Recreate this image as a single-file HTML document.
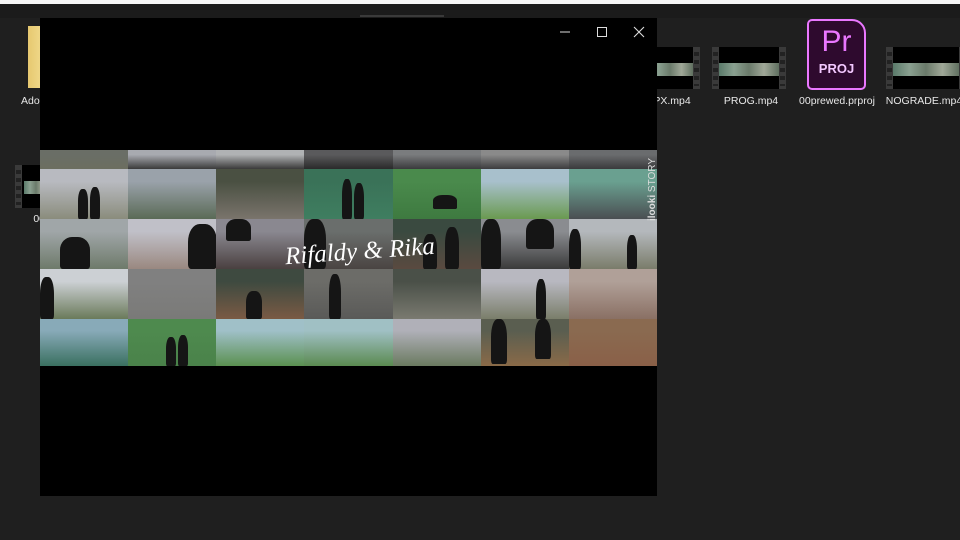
<!DOCTYPE html>
<html><head><meta charset="utf-8"><style>
*{margin:0;padding:0;box-sizing:border-box}
body{width:960px;height:540px;background:#1f1f1f;position:relative;overflow:hidden;font-family:"Liberation Sans",sans-serif}
.abs{position:absolute}
.lbl{position:absolute;color:#e8e8e8;font-size:10.5px;text-align:center;width:90px}
.film{position:absolute;background:#000;border-left:7px solid #3a3a3a;border-right:7px solid #3a3a3a}
.film:before,.film:after{content:"";position:absolute;top:3px;bottom:3px;width:5px;background:repeating-linear-gradient(#3a3a3a 0 2px,#222 2px 6px,#3a3a3a 6px 8px)}
.film:before{left:-6px}.film:after{right:-6px}
.strip{position:absolute;left:0;right:0;top:38%;height:30%;background:linear-gradient(90deg,#5a7a6a,#8aa090,#6a7a6a,#a0a898,#607060)}
#win{left:40px;top:18px;width:617px;height:478px;background:#000}
.grid{position:absolute;left:0;top:132px;width:617px;height:216px}
.c{position:absolute;overflow:hidden}
.p{position:absolute;background:#151515;border-radius:40% 40% 10% 10%}
</style></head><body>
<div class="abs" style="left:0;top:0;width:960px;height:4px;background:#f6f6f6"></div>
<div class="abs" style="left:0;top:4px;width:960px;height:14px;background:#1b1b1b"></div>
<div class="abs" style="left:360px;top:15px;width:84px;height:2px;background:#3a3a3a"></div>

<div class="abs" style="left:28px;top:26px;width:14px;height:62px;background:linear-gradient(90deg,#e6c870,#f0d98a)"></div>
<div class="lbl" style="left:-20px;top:95px;width:80px;text-align:right;padding-right:18px">Adol</div>
<div class="lbl" style="left:-20px;top:107px;width:80px;text-align:right;padding-right:7px">P</div>
<div class="lbl" style="left:-20px;top:119px;width:80px;text-align:right;padding-right:5px">P</div>
<div class="film" style="left:15px;top:165px;width:40px;height:43px"><div class="strip" style="left:2px"></div></div>
<div class="lbl" style="left:-15px;top:213px;width:60px;text-align:right">00</div>

<div class="film" style="left:640px;top:47px;width:60px;height:42px"><div class="strip"></div></div>
<div class="lbl" style="left:627px;top:95px">PX.mp4</div>
<div class="film" style="left:712px;top:47px;width:74px;height:42px"><div class="strip"></div></div>
<div class="lbl" style="left:706px;top:95px">PROG.mp4</div>
<div class="abs" style="left:807px;top:19px;width:59px;height:71px;background:#2e0a2e;border:2px solid #ea77ff;border-radius:5px 14px 5px 5px;text-align:center">
<div style="font-size:30px;line-height:32px;margin-top:5px;color:#ea77ff">Pr</div>
<div style="font-size:13px;font-weight:bold;margin-top:3px;color:#f3c8ff">PROJ</div></div>
<div class="lbl" style="left:792px;top:95px">00prewed.prproj</div>
<div class="film" style="left:886px;top:47px;width:80px;height:42px"><div class="strip"></div></div>
<div class="lbl" style="left:879px;top:95px">NOGRADE.mp4</div>

<div class="abs" id="win">
<svg class="abs" style="left:515px;top:6px" width="100" height="16">
<line x1="5" y1="8" x2="15" y2="8" stroke="#ddd" stroke-width="1"/>
<rect x="42.5" y="3.5" width="9" height="9" fill="none" stroke="#ddd"/>
<path d="M79 3L89 13M89 3L79 13" stroke="#ddd" stroke-width="1.1"/></svg>
<div class="grid" id="g"></div>
<div class="abs" style="left:245px;top:220px;font-family:'Liberation Serif',serif;font-style:italic;color:#fff;font-size:25px;transform:rotate(-4deg)">Rifaldy &amp; Rika</div>
<div class="abs" style="left:607px;top:140px;color:#ddd;font-size:10px;writing-mode:vertical-rl;transform:rotate(180deg)"><b>ilooki</b> STORY</div>
</div>
<script>
var W=617/7;var rows=[[0,19],[19,50],[69,50],[119,50],[169,47]];
var C=[
[["#6a6e66","#6c6e60"],["#a8aab0","#3a3a3a"],["#b0b2b4","#3a3a3a"],["#5a5a5c","#2a2a2a"],["#7a7c7e","#3a3a3c"],["#8a8a8a","#3c3c3e"],["#6a6c6e","#3a3a3c"]],
[["#b8bac0","#8a8c7c"],["#9aa2aa","#5a6a56"],["#4a5042","#7a746c"],["#3a7258","#3f7e60"],["#4a8a4c","#3e7a40"],["#a8c0cc","#6a9a50"],["#6aa090","#4a4e52"]],
[["#a0a6a8","#6e7a6a"],["#c0c0c8","#9a8880"],["#8a8890","#4a4040"],["#6a6e6c","#4a4442"],["#3a4a40","#5a4a40"],["#8a8c90","#3a3a3a"],["#b4b8bc","#7a7c6a"]],
[["#ccd0d4","#6a7a5a"],["#808080","#7a7a78"],["#3e4a40","#7a5a44"],["#6c6c68","#5a5a58"],["#4a5048","#7a7a70"],["#b8b8c0","#7a7e6a"],["#b0a098","#8a7064"]],
[["#88aab8","#3a7060"],["#4e8a4e","#4a824a"],["#a0c0c8","#5a9050"],["#a0c0c4","#5a8a50"],["#b0b0b8","#6a7a60"],["#5a5e50","#8a6a48"],["#8a6a50","#8a6048"]]];
/* figures: [row,col,x,y,w,h] */
var F=[[1,0,38,20,10,30],[1,0,50,18,10,32],[1,3,38,10,10,40],[1,3,50,14,10,36],[1,4,40,26,24,14],[2,0,20,18,30,32],[2,1,60,5,29,45],[2,2,10,0,25,22],[2,3,0,0,22,50],[2,4,30,15,14,35],[2,4,52,8,14,42],[2,5,0,0,20,50],[2,5,45,0,28,30],[2,6,0,10,12,40],[2,6,58,16,10,34],[3,0,0,8,14,42],[3,2,30,22,16,28],[3,3,25,5,12,45],[3,5,55,10,10,40],[4,1,38,18,10,29],[4,1,50,16,10,31],[4,5,10,0,16,45],[4,5,54,0,16,40]];
var g=document.getElementById('g'),h='';
function L(j){return Math.round(j*W)}
rows.forEach(function(r,i){for(var j=0;j<7;j++){var c=C[i][j];
var inner='';F.forEach(function(f){if(f[0]==i&&f[1]==j)inner+='<div class="p" style="left:'+f[2]+'px;top:'+f[3]+'px;width:'+f[4]+'px;height:'+f[5]+'px"></div>';});
h+='<div class="c" style="left:'+L(j)+'px;top:'+r[0]+'px;width:'+(L(j+1)-L(j))+'px;height:'+r[1]+'px;background:linear-gradient('+c[0]+' 0%,'+c[0]+' 25%,'+c[1]+' 100%)">'+inner+'</div>';}});
g.innerHTML=h;
</script>
</body></html>
